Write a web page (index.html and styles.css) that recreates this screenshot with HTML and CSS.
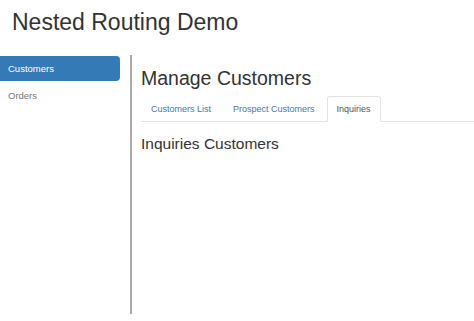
FILE: index.html
```html
<!DOCTYPE html>
<html lang="en">
<head>
  <meta charset="UTF-8" />
  <meta name="viewport" content="width=device-width, initial-scale=1.0" />
  <title>Nested Routing Demo</title>
  <link rel="stylesheet" href="styles.css">
</head>
<body>
  <h1 class="page-title">Nested Routing Demo</h1>
  <div class="layout">
    <ul class="side-nav">
      <li class="active"><a href="#">Customers</a></li>
      <li><a href="#">Orders</a></li>
    </ul>
    <div class="content">
      <h2>Manage Customers</h2>
      <ul class="tabs">
        <li><a href="#">Customers List</a></li>
        <li><a href="#">Prospect Customers</a></li>
        <li class="active"><a href="#">Inquiries</a></li>
      </ul>
      <h3>Inquiries Customers</h3>
    </div>
  </div>
</body>
</html>
```

FILE: styles.css
```css
body {
  font-family: "Liberation Sans", Arial, sans-serif;
  color: #333;
  background: #fff;
  margin: 0;
  padding: 0;
}
a {
  text-decoration: none;
}
.page-title {
  font-size: 23px;
  font-weight: normal;
  line-height: 27px;
  margin: 0;
  padding: 9px 12px 0;
  height: 46px;
}
.layout {
  display: flex;
  align-items: flex-start;
}
.side-nav {
  list-style: none;
  margin: 1px 10px 0 0;
  padding: 0;
  width: 120px;
}
.side-nav li {
  margin-bottom: 2px;
}
.side-nav a {
  display: block;
  height: 25px;
  line-height: 25px;
  padding: 0 8px;
  font-size: 9.5px;
  color: #777;
  border-radius: 0 4px 4px 0;
}
.side-nav .active a {
  background: #337ab7;
  color: #fff;
}
.content {
  flex: 1;
  border-left: 2px solid #aaa;
  min-height: 259px;
  padding-left: 9px;
}
.content h2 {
  font-size: 19.5px;
  font-weight: normal;
  line-height: 21px;
  margin: 13px 0 7px;
}
.tabs {
  list-style: none;
  display: flex;
  margin: 0;
  padding: 0;
  border-bottom: 1px solid #e4e4e4;
}
.tabs li {
  margin: 0 2px -1px 0;
}
.tabs a {
  display: block;
  font-size: 9px;
  line-height: 13px;
  padding: 6px 9px 5px;
  border: 1px solid transparent;
  border-radius: 3px 3px 0 0;
  color: #4a76a3;
}
.tabs .active a {
  color: #555;
  border-color: #e4e4e4 #e4e4e4 #fff;
  background: #fff;
}
.content h3 {
  font-size: 15.5px;
  font-weight: normal;
  line-height: 17px;
  margin: 13px 0 0;
}
```
